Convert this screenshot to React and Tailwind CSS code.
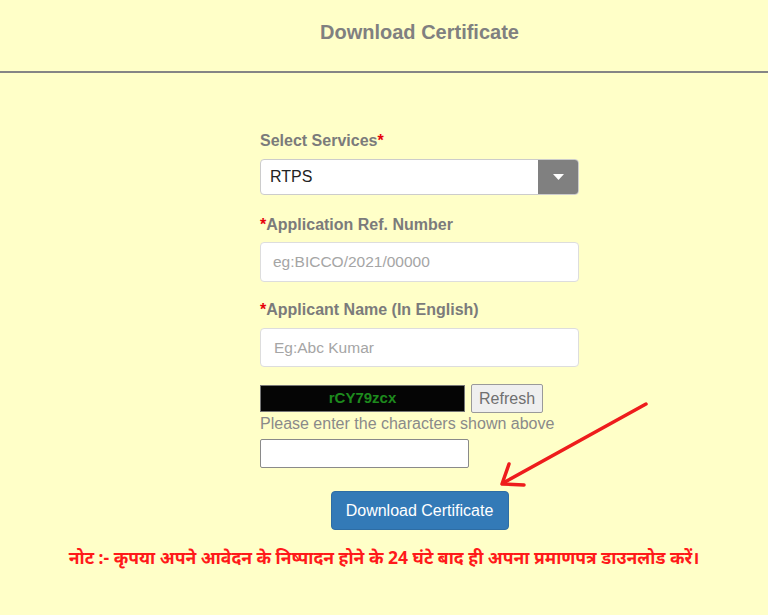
import React from 'react'

const App = () => {
  return (
    <div className="relative w-[768px] h-[615px] overflow-hidden bg-[#ffffc8] font-['Liberation_Sans',Arial,sans-serif]">
      <div className="h-[73px] border-b-2 border-[#858585] flex items-center justify-center pl-[71px] pb-[8px]">
        <h1 className="text-[20px] font-bold text-[#808080]">Download Certificate</h1>
      </div>

      <div className="w-[319px] ml-[260px] mt-[58px] flex flex-col">
        <label className="text-[16px] font-bold text-[#7b7b7b] leading-[20px]">
          Select Services<span className="text-red-600">*</span>
        </label>
        <div className="mt-[8px] h-[36px] flex rounded-[4px] border border-[#ccc] bg-white overflow-hidden">
          <div className="flex-1 flex items-center pl-[9px] text-[16px] text-[#222]">RTPS</div>
          <div className="w-[40px] bg-[#808080] flex items-center justify-center">
            <svg width="11" height="6" viewBox="0 0 11 6"><path d="M0 0h11L5.5 6z" fill="#fff" /></svg>
          </div>
        </div>

        <label className="mt-[20px] text-[16px] font-bold text-[#7b7b7b] leading-[20px]">
          <span className="text-red-600">*</span>Application Ref. Number
        </label>
        <input
          className="mt-[7px] h-[40px] rounded-[4px] border border-[#ddd] bg-white px-[12px] text-[15.5px] placeholder:text-[#a5a5a5] outline-none"
          placeholder="eg:BICCO/2021/00000"
        />

        <label className="mt-[18px] text-[16px] font-bold text-[#7b7b7b] leading-[20px]">
          <span className="text-red-600">*</span>Applicant Name (In English)
        </label>
        <input
          className="mt-[8px] h-[39px] rounded-[4px] border border-[#ddd] bg-white px-[13px] text-[15.5px] placeholder:text-[#a5a5a5] outline-none"
          placeholder="Eg:Abc Kumar"
        />

        <div className="mt-[17px] flex items-center gap-[6px]">
          <div className="w-[205px] h-[27px] bg-[#050505] border border-[#777] flex items-center justify-center text-[15px] font-bold text-[#1d8a1d]">
            rCY79zcx
          </div>
          <button className="h-[29px] px-[7px] bg-[#efefef] border border-[#9a9a9a] rounded-[2px] text-[16px] text-[#707070]">
            Refresh
          </button>
        </div>
        <p className="mt-[1px] text-[16px] text-[#8a8a8a] leading-[20px]">Please enter the characters shown above</p>
        <input className="mt-[5px] w-[209px] h-[29px] bg-white border border-[#8a8a8a] rounded-[2px] outline-none" />
      </div>

      <div className="flex justify-center mt-[23px] pl-[71px]">
        <button className="w-[178px] h-[39px] rounded-[4px] bg-[#337ab7] border border-[#2e6da4] text-white text-[16px]">
          Download Certificate
        </button>
      </div>

      <p className="mt-[14px] text-center text-[17.5px] font-bold text-[#ff1a1a] font-['Noto_Sans','Liberation_Sans',sans-serif]">
        नोट :- कृपया अपने आवेदन के निष्पादन होने के 24 घंटे बाद ही अपना प्रमाणपत्र डाउनलोड करें।
      </p>

      <svg className="absolute left-0 top-0 pointer-events-none" width="768" height="615">
        <g stroke="#ee1c1c" strokeWidth="3.5" strokeLinecap="round" fill="none">
          <path d="M646 404 L503 483" />
          <path d="M509 464 L502 484 L524 485" strokeLinejoin="round" />
        </g>
      </svg>
    </div>
  )
}

export default App
